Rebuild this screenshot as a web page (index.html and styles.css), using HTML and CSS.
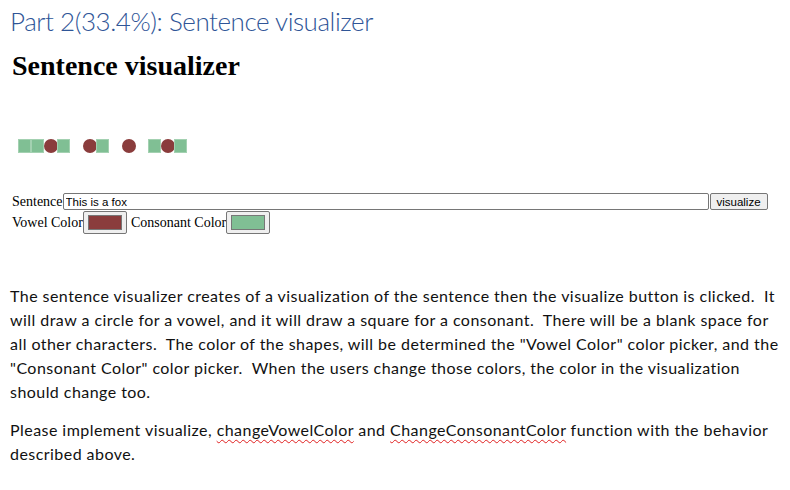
FILE: index.html
```html
<!DOCTYPE html>
<html>
<head>
<meta charset="utf-8">
<link rel="stylesheet" href="styles.css">
</head>
<body>
<div class="doc">
  <h2 class="part-title">Part 2(33.4%): Sentence visualizer</h2>
  <div class="frame">
    <h1 class="app-title">Sentence visualizer</h1>
    <div class="viz">
      <span class="sq"></span><span class="sq"></span><span class="ci"></span><span class="sq"></span><span class="sp"></span><span class="ci"></span><span class="sq"></span><span class="sp"></span><span class="ci"></span><span class="sp"></span><span class="sq"></span><span class="ci"></span><span class="sq"></span>
    </div>
    <div class="row row-sentence">
      <label class="lbl" for="sentence">Sentence</label><input id="sentence" class="txt" type="text" value="This is a fox"><button class="btn">visualize</button>
    </div>
    <div class="row row-colors">
      <label class="lbl">Vowel Color</label><input class="clr" type="color" value="#8a3c3c"><label class="lbl lbl-gap">Consonant Color</label><input class="clr" type="color" value="#80bf94">
    </div>
  </div>
  <p class="para">The sentence visualizer creates of a visualization of the sentence then the visualize button is clicked.&nbsp; It<br>will draw a circle for a vowel, and it will draw a square for a consonant.&nbsp; There will be a blank space for<br>all other characters.&nbsp; The color of the shapes, will be determined the "Vowel Color" color picker, and the<br>"Consonant Color" color picker.&nbsp; When the users change those colors, the color in the visualization<br>should change too.</p>
  <p class="para">Please implement visualize, <span class="spell">changeVowelColor</span> and <span class="spell">ChangeConsonantColor</span> function with the behavior<br>described above.</p>
</div>
</body>
</html>
```
FILE: styles.css
```css
html, body {
  margin: 0;
  padding: 0;
  background: #ffffff;
}
.doc {
  padding: 0 0 0 10px;
}
.part-title {
  margin: 0;
  padding-top: 4px;
  font-family: "Lato", "Liberation Sans", sans-serif;
  font-weight: 300;
  font-size: 26px;
  letter-spacing: -0.45px;
  line-height: 34px;
  color: #2f5597;
}
.frame {
  padding-left: 2px;
  font-family: "Liberation Serif", serif;
  font-size: 14px;
  color: #000;
}
.app-title {
  margin: 12px 0 0 0;
  font-family: "Liberation Serif", serif;
  font-weight: bold;
  font-size: 28px;
  line-height: 32px;
}
.viz {
  display: flex;
  height: 14px;
  margin: 57px 0 0 6px;
}
.sq, .ci, .sp {
  width: 13px;
  height: 14px;
  flex: none;
  box-sizing: border-box;
}
.sq {
  background: #80bf94;
  border: 1px solid #a3d1b1;
}
.ci {
  background: #8a3c3c;
  border-radius: 50%;
  width: 14px;
  margin-right: -1px;
}
.row {
  display: flex;
  align-items: center;
}
.row-sentence {
  margin-top: 40px;
  height: 17px;
}
.row-colors {
  margin-top: 1px;
  height: 23px;
}
.lbl {
  font-family: "Liberation Serif", serif;
  font-size: 14px;
  line-height: 16px;
}
.lbl-gap {
  margin-left: 4px;
}
.txt {
  box-sizing: border-box;
  width: 646px;
  height: 17px;
  margin: 0;
  padding: 0 2px;
  border: 1px solid #767676;
  border-radius: 2px;
  font-family: "Liberation Sans", Arial, sans-serif;
  font-size: 11.5px;
  color: #000;
  outline: none;
}
.btn {
  box-sizing: border-box;
  width: 58px;
  height: 17px;
  margin: 0 0 0 1px;
  padding: 0;
  border: 1px solid #767676;
  border-radius: 2px;
  background: #efefef;
  font-family: "Liberation Sans", Arial, sans-serif;
  font-size: 11.5px;
  color: #000;
}
.clr {
  box-sizing: border-box;
  width: 44px;
  height: 23px;
  margin: 0;
  padding: 3px 4px;
  border: 1px solid #767676;
  border-radius: 2px;
  background: #efefef;
}
.clr::-webkit-color-swatch-wrapper {
  padding: 0;
}
.clr::-webkit-color-swatch {
  border: 1px solid #777777;
  border-radius: 0;
}
.para {
  margin: 0;
  font-family: "Lato", "Liberation Sans", sans-serif;
  font-size: 16px;
  letter-spacing: 0.45px;
  line-height: 24px;
  color: #111111;
}
.para:first-of-type {
  margin-top: 50px;
}
.para + .para {
  margin-top: 14px;
}
.spell {
  text-decoration: underline wavy #e02020;
  text-decoration-thickness: 1px;
  text-underline-offset: 3px;
  text-decoration-skip-ink: none;
}
```
